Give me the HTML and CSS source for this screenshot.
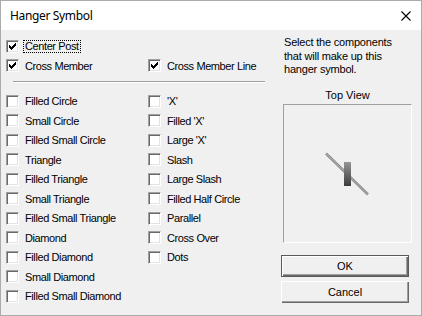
FILE: index.html
```html
<!DOCTYPE html>
<html>
<head>
<meta charset="utf-8">
<title>Hanger Symbol</title>
<link rel="stylesheet" href="styles.css">
</head>
<body>
<div class="window">
  <div class="titlebar">
    <span class="title">Hanger Symbol</span>
    <svg class="close" width="10" height="10" viewBox="0 0 10 10"><path d="M0.5 0.5L9.5 9.5M9.5 0.5L0.5 9.5" stroke="#000" stroke-width="1.1" fill="none"/></svg>
  </div>
  <div class="main">
    <div class="left">
      <div class="toprow">
        <label class="item"><span class="cb checked"><svg width="13" height="13" viewBox="0 0 13 13"><path d="M3 5h1v3H3zM4 6h1v3H4zM5 7h1v3H5zM6 6h1v3H6zM7 5h1v3H7zM8 4h1v3H8zM9 3h1v3H9z" fill="#000"/></svg></span><span class="text focus">Center Post</span></label>
      </div>
      <div class="toprow two">
        <label class="item"><span class="cb checked"><svg width="13" height="13" viewBox="0 0 13 13"><path d="M3 5h1v3H3zM4 6h1v3H4zM5 7h1v3H5zM6 6h1v3H6zM7 5h1v3H7zM8 4h1v3H8zM9 3h1v3H9z" fill="#000"/></svg></span><span class="text">Cross Member</span></label>
        <label class="item"><span class="cb checked"><svg width="13" height="13" viewBox="0 0 13 13"><path d="M3 5h1v3H3zM4 6h1v3H4zM5 7h1v3H5zM6 6h1v3H6zM7 5h1v3H7zM8 4h1v3H8zM9 3h1v3H9z" fill="#000"/></svg></span><span class="text">Cross Member Line</span></label>
      </div>
      <div class="separator"></div>
      <div class="grid">
        <label class="item"><span class="cb"></span><span class="text">Filled Circle</span></label>
        <label class="item"><span class="cb"></span><span class="text">'X'</span></label>
        <label class="item"><span class="cb"></span><span class="text">Small Circle</span></label>
        <label class="item"><span class="cb"></span><span class="text">Filled 'X'</span></label>
        <label class="item"><span class="cb"></span><span class="text">Filled Small Circle</span></label>
        <label class="item"><span class="cb"></span><span class="text">Large 'X'</span></label>
        <label class="item"><span class="cb"></span><span class="text">Triangle</span></label>
        <label class="item"><span class="cb"></span><span class="text">Slash</span></label>
        <label class="item"><span class="cb"></span><span class="text">Filled Triangle</span></label>
        <label class="item"><span class="cb"></span><span class="text">Large Slash</span></label>
        <label class="item"><span class="cb"></span><span class="text">Small Triangle</span></label>
        <label class="item"><span class="cb"></span><span class="text">Filled Half Circle</span></label>
        <label class="item"><span class="cb"></span><span class="text">Filled Small Triangle</span></label>
        <label class="item"><span class="cb"></span><span class="text">Parallel</span></label>
        <label class="item"><span class="cb"></span><span class="text">Diamond</span></label>
        <label class="item"><span class="cb"></span><span class="text">Cross Over</span></label>
        <label class="item"><span class="cb"></span><span class="text">Filled Diamond</span></label>
        <label class="item"><span class="cb"></span><span class="text">Dots</span></label>
        <label class="item"><span class="cb"></span><span class="text">Small Diamond</span></label>
        <div></div>
        <label class="item"><span class="cb"></span><span class="text">Filled Small Diamond</span></label>
        <div></div>
      </div>
    </div>
    <div class="right">
      <p class="desc">Select the components that will make up this hanger symbol.</p>
      <div class="viewlabel">Top View</div>
      <div class="preview">
        <svg width="127" height="138" viewBox="0 0 127 138">
          <defs>
            <linearGradient id="post" x1="0" y1="0" x2="0" y2="1">
              <stop offset="0" stop-color="#959595"/>
              <stop offset="1" stop-color="#3c3c3c"/>
            </linearGradient>
          </defs>
          <line x1="42" y1="48.5" x2="84" y2="89.5" stroke="#8c8c8c" stroke-width="2.6"/>
          <line x1="42" y1="48.5" x2="84" y2="89.5" stroke="#b4b4b4" stroke-width="1"/>
          <rect x="60" y="57" width="7" height="24" fill="url(#post)"/>
        </svg>
      </div>
      <div class="btn default">OK</div>
      <div class="btn">Cancel</div>
    </div>
  </div>
</div>
</body>
</html>
```

FILE: styles.css
```css
html, body {
  margin: 0;
  padding: 0;
  background: #f0f0f0;
}

.window {
  width: 422px;
  height: 316px;
  box-sizing: border-box;
  border: 1px solid #ababab;
  background: #f0f0f0;
  display: flex;
  flex-direction: column;
  font-family: "Liberation Sans", Arial, sans-serif;
  font-size: 11px;
  color: #000;
}

.titlebar {
  height: 29px;
  flex: none;
  background: #fff;
  display: flex;
  align-items: center;
  justify-content: space-between;
  padding: 0 10px 0 9px;
}

.title {
  font-family: "Noto Sans", "Open Sans", sans-serif;
  font-size: 12px;
  letter-spacing: -0.35px;
  color: #000;
}

.close {
  display: block;
}

.main {
  flex: 1;
  display: flex;
}

.left {
  width: 274px;
  padding: 7px 0 0 5px;
  flex: none;
}

.toprow {
  height: 19px;
  display: flex;
  align-items: center;
}

.toprow.two .item:first-child {
  width: 142px;
}

.item {
  display: flex;
  align-items: center;
  height: 19.5px;
  white-space: nowrap;
  letter-spacing: -0.4px;
}

.toprow .item {
  height: 19px;
}

.cb {
  width: 13px;
  height: 13px;
  box-sizing: border-box;
  flex: none;
  background: #fff;
  border-style: solid;
  border-width: 1px;
  border-color: #a0a0a0 #fff #fff #a0a0a0;
  box-shadow: inset 1px 1px 0 #696969, inset -1px -1px 0 #e3e3e3;
  position: relative;
}

.cb svg {
  position: absolute;
  left: -1px;
  top: -1px;
}

.text {
  margin-left: 6px;
}

.text.focus {
  margin-left: 4px;
  padding: 0 1px;
  height: 11px;
  line-height: 11px;
  border: 1px dotted #000;
}

.separator {
  margin: 6px 0 0 7px;
  width: 252px;
  height: 1px;
  background: #a0a0a0;
  border-bottom: 1px solid #fff;
}

.grid {
  margin-top: 8.25px;
  display: grid;
  grid-template-columns: 142px 1fr;
  grid-auto-rows: 19.5px;
}

.right {
  flex: none;
  width: 131px;
  margin-left: 1px;
  padding-top: 6px;
}

.desc {
  margin: 0 0 0 3px;
  line-height: 13.5px;
  width: 124px;
  letter-spacing: -0.2px;
}

.viewlabel {
  margin-top: 12.5px;
  line-height: 13.5px;
  text-align: center;
  padding-left: 2px;
}

.preview {
  margin: 1.25px 0 0 2px;
  width: 129px;
  height: 139px;
  box-sizing: border-box;
  border-style: solid;
  border-width: 1px;
  border-color: #a0a0a0 #fff #fff #a0a0a0;
  background: #f0f0f0;
}

.preview svg {
  display: block;
}

.btn {
  width: 128px;
  height: 22px;
  box-sizing: border-box;
  margin-bottom: 4px;
  display: flex;
  align-items: center;
  justify-content: center;
  background: #f0f0f0;
  box-shadow: inset 1px 1px 0 #fff, inset -1px -1px 0 #696969, inset -2px -2px 0 #a0a0a0;
}

.btn.default {
  margin-top: 12px;
  border: 1px solid #5a5a5a;
  box-shadow: inset 1px 1px 0 #fff, inset -1px -1px 0 #696969, inset -2px -2px 0 #a0a0a0;
}
```
